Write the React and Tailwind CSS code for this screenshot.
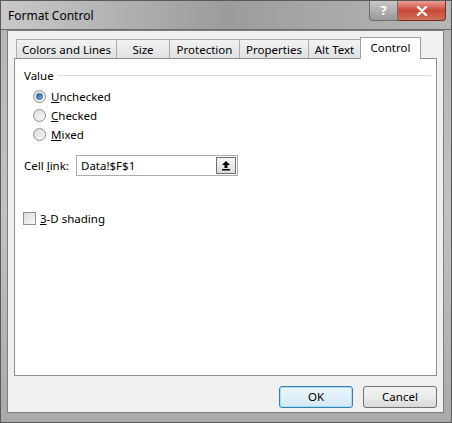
import { useState } from 'react'

const font = { fontFamily: '"Segoe UI", "Noto Sans", "Open Sans", sans-serif' }

function Radio({ checked, label, u, onClick }) {
    return (
        <button onClick={onClick} className="flex items-center h-[19px] gap-[5px] text-left">
            <span className="w-[13px] h-[13px] rounded-full border border-[#8f8f8f] bg-gradient-to-br from-[#dcdcdc] to-[#f8f8f8] flex items-center justify-center">
                {checked && <span className="w-[7px] h-[7px] rounded-full bg-gradient-to-br from-[#1b5ea8] to-[#7fb2e6] border border-[#2c5f99]" />}
            </span>
            <span><span className="underline">{u}</span>{label}</span>
        </button>
    )
}

export default function App() {
    const [value, setValue] = useState('unchecked')
    const [shading, setShading] = useState(false)
    const tabs = [
        ['Colors and Lines', 'w-[101px]'],
        ['Size', 'w-[54px]'],
        ['Protection', 'w-[71px]'],
        ['Properties', 'w-[70px]'],
        ['Alt Text', 'w-[53px]'],
    ]

    return (
        <div style={font} className="w-[452px] h-[423px] overflow-hidden text-[11.5px] text-black bg-gradient-to-b from-[#b4b4b4] via-[#c2c2c2] to-[#a9a9a9] flex flex-col border border-[#5a5a5a]">
            {/* title bar */}
            <div className="h-[29px] flex items-start justify-between bg-gradient-to-r from-[#c9c9c9] via-[#9c9c9c] to-[#b6b6b6] border-b border-[#6c6c6c]">
                <span className="mt-[6px] ml-[7px] text-[12px] text-black">Format Control</span>
                <div className="flex mr-[5px]">
                    <div className="w-[29px] h-[20px] rounded-bl-[4px] border border-[#6d6d6d] border-t-0 bg-gradient-to-b from-[#c7c7c7] to-[#9a9a9a] flex items-center justify-center text-white font-bold text-[13px]">?</div>
                    <div className="w-[48px] h-[20px] rounded-br-[4px] border border-[#7a2b22] border-t-0 border-l-0 bg-gradient-to-b from-[#e8a093] via-[#c9473a] to-[#d0705b] flex items-center justify-center">
                        <svg width="12" height="10" viewBox="0 0 12 10">
                            <path d="M2 1 L10 9 M10 1 L2 9" stroke="#fff" strokeWidth="2.4" strokeLinecap="round" />
                        </svg>
                    </div>
                </div>
            </div>

            {/* client */}
            <div className="flex-1 ml-[6px] mr-[7px] mb-[9px] bg-[#f0f0f0] border border-[#7e7e7e] flex flex-col">
                <div className="flex items-end mt-[6px] ml-[8px] h-[21px]">
                    {tabs.map(([t, w]) => (
                        <div key={t} className={`${w} h-[19px] border border-b-0 border-[#acacac] -ml-px first:ml-0 bg-gradient-to-b from-[#f2f2f2] to-[#e1e1e1] flex items-center justify-center pt-px`}>{t}</div>
                    ))}
                    <div className="w-[61px] h-[22px] -mb-px relative z-10 bg-white border border-b-0 border-[#a0a0a0] -ml-px flex items-center justify-center pb-[2px]">Control</div>
                </div>

                <div className="mx-[6px] h-[318px] bg-white border border-[#8f8f8f] flex flex-col">
                    <div className="flex items-center mt-[8px] ml-[9px] mr-[5px]">
                        <span>Value</span>
                        <div className="flex-1 h-px bg-[#dcdcdc] ml-[4px]" />
                    </div>
                    <div className="flex flex-col mt-[3px] ml-[18px]">
                        <Radio checked={value === 'unchecked'} onClick={() => setValue('unchecked')} u="U" label="nchecked" />
                        <Radio checked={value === 'checked'} onClick={() => setValue('checked')} u="C" label="hecked" />
                        <Radio checked={value === 'mixed'} onClick={() => setValue('mixed')} u="M" label="ixed" />
                    </div>
                    <div className="flex items-center mt-[11px] ml-[9px]">
                        <span className="w-[52px]">Cell <span className="underline">l</span>ink:</span>
                        <div className="w-[162px] h-[21px] border border-[#abadb3] flex items-center justify-between pl-[4px] pr-[1px]">
                            <span>Data!$F$1</span>
                            <div className="w-[20px] h-[17px] border border-[#707070] bg-gradient-to-b from-[#f6f6f6] to-[#dddddd] flex items-center justify-center">
                                <svg width="10" height="11" viewBox="0 0 10 11">
                                    <path d="M5 1 L1 5 H3.5 V8 H6.5 V5 H9 Z" fill="#000" />
                                    <rect x="1" y="9" width="8" height="1.5" fill="#000" />
                                </svg>
                            </div>
                        </div>
                    </div>
                    <button onClick={() => setShading(s => !s)} className="flex items-center gap-[4px] mt-[34px] ml-[8px] text-left">
                        <span className="w-[13px] h-[13px] border border-[#8f8f8f] bg-gradient-to-br from-[#dcdcdc] to-[#f7f7f7] flex items-center justify-center text-[10px] leading-none">{shading ? '✓' : ''}</span>
                        <span><span className="underline">3</span>-D shading</span>
                    </button>
                </div>

                <div className="flex justify-end gap-[10px] mt-[10px] mr-[6px]">
                    <button className="w-[74px] h-[22px] rounded-[3px] border border-[#3c7fb1] shadow-[inset_0_0_0_1px_#9fe0f8] bg-gradient-to-b from-[#eaf6fd] to-[#d5e9f5]">OK</button>
                    <button className="w-[74px] h-[22px] rounded-[3px] border border-[#707070] bg-gradient-to-b from-[#f2f2f2] via-[#ebebeb] to-[#d9d9d9]">Cancel</button>
                </div>
            </div>
        </div>
    )
}
